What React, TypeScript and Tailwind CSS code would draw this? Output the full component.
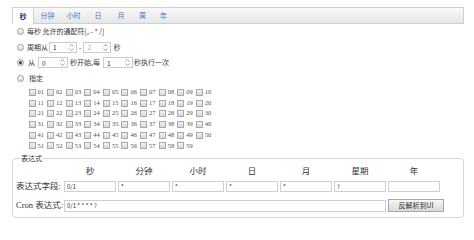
import React from 'react';

const tabs = [
  { label: '秒', w: 'w-[21px]' },
  { label: '分钟', w: 'w-[27px]' },
  { label: '小时', w: 'w-[25px]' },
  { label: '日', w: 'w-[24px]' },
  { label: '月', w: 'w-[22px]' },
  { label: '周', w: 'w-[21px]' },
  { label: '年', w: 'w-[21px]' },
];

const Radio = ({ checked = false }: { checked?: boolean }) => (
  <span className="relative inline-flex items-center justify-center w-[7px] h-[7px] rounded-full border border-[#9a9a9a] bg-gradient-to-b from-[#fdfdfd] to-[#dcdcdc] shrink-0">
    {checked && <span className="w-[3px] h-[3px] rounded-full bg-[#2f3a4a]" />}
  </span>
);

const Spinner = () => (
  <svg width="7" height="9" viewBox="0 0 7 9" className="shrink-0">
    <path d="M1.5 3.5 L3.5 1.5 L5.5 3.5" fill="none" stroke="#7e9cc0" strokeWidth="0.9" />
    <path d="M1.5 5.5 L3.5 7.5 L5.5 5.5" fill="none" stroke="#7e9cc0" strokeWidth="0.9" />
  </svg>
);

const SpinInput = ({ value, w, faded = false }: { value: string; w: string; faded?: boolean }) => (
  <span className={`inline-flex items-center justify-between h-[11px] border border-[#cbcbcb] bg-white pl-[3px] pr-[1px] ${w}`}>
    <span className={`text-[6.5px] leading-none ${faded ? 'text-[#aaa]' : 'text-[#333]'}`}>{value}</span>
    <Spinner />
  </span>
);

const numbers = Array.from({ length: 59 }, (_, i) => String(i + 1).padStart(2, '0'));

const fields = ['秒', '分钟', '小时', '日', '月', '星期', '年'];
const values = ['0/1', '*', '*', '*', '*', '?', ''];

export default function App() {
  return (
    <div className="w-[474px] h-[240px] bg-white overflow-hidden font-['Noto_Sans_CJK_SC','Noto_Sans',sans-serif] text-[#3a3a3a]">
      <div className="pl-[12px] pr-[10px] pt-[7px]">
        {/* tab bar */}
        <div className="flex h-[17px] border border-[#d0d0d0] bg-gradient-to-b from-[#f8f8f8] to-[#e7e7e7]">
          {tabs.map((t, i) => (
            <div
              key={t.label}
              className={`${t.w} flex items-center justify-center text-[7px] leading-none ${
                i === 0 ? 'bg-white font-bold text-[#1d3f78] border-r border-[#d0d0d0] -mb-px' : 'text-[#3b7bc8]'
              }`}
            >
              {t.label}
            </div>
          ))}
        </div>

        {/* rows */}
        <div className="pl-[5px] text-[7px] leading-none">
          <div className="h-[15.5px] flex items-center">
            <Radio />
            <span className="ml-[3px]">每秒 允许的通配符[, - * /]</span>
          </div>
          <div className="h-[15.5px] flex items-center">
            <Radio />
            <span className="ml-[3px]">周期从</span>
            <span className="ml-[1px]"><SpinInput value="1" w="w-[28px]" /></span>
            <span className="mx-[2px]">-</span>
            <SpinInput value="2" w="w-[28px]" faded />
            <span className="ml-[2px]">秒</span>
          </div>
          <div className="h-[15.5px] flex items-center">
            <Radio checked />
            <span className="ml-[4px]">从</span>
            <span className="ml-[3px]"><SpinInput value="0" w="w-[30px]" /></span>
            <span className="ml-[2px]">秒开始,每</span>
            <span className="ml-[3px]"><SpinInput value="1" w="w-[30px]" /></span>
            <span className="ml-[1px]">秒执行一次</span>
          </div>
          <div className="h-[15.5px] flex items-center">
            <Radio />
            <span className="ml-[5px]">指定</span>
          </div>
        </div>

        {/* checkbox grid */}
        <div className="ml-[16.5px] mt-[1px] grid grid-cols-[repeat(10,18.6px)]">
          {numbers.map((n) => (
            <div key={n} className="h-[10.7px] flex items-center">
              <span className="w-[7px] h-[7px] border border-[#a9a9a9] bg-gradient-to-b from-[#f3f3f3] to-[#d8d8d8] shrink-0" />
              <span className="ml-[2px] text-[6.5px] leading-none text-[#555] font-['Liberation_Serif',serif]">{n}</span>
            </div>
          ))}
        </div>

        {/* expression */}
        <fieldset className="mt-[2.5px] border border-[#d6d6d6] rounded-[4px] px-[3px] pb-[5px]">
          <legend className="ml-[4px] px-[1px] text-[7px] leading-[9px] text-[#333]">表达式</legend>
          <div className="grid grid-cols-[46px_repeat(7,52px)] gap-x-[2px]">
            <div className="h-[15px]" />
            {fields.map((f) => (
              <div key={f} className="h-[15px] flex items-center justify-center text-[8.5px] leading-none text-[#333]">
                {f}
              </div>
            ))}

            <div className="mt-[3px] h-[11px] flex items-center whitespace-nowrap text-[8.5px] leading-none text-[#333] font-['Liberation_Serif','Noto_Sans_CJK_SC',serif]">
              表达式字段:
            </div>
            {values.map((v, i) => (
              <input
                key={i}
                readOnly
                value={v}
                className="mt-[3px] h-[11px] w-[52px] border border-[#cfcfcf] px-[2px] text-[6px] leading-none text-[#333] outline-none"
              />
            ))}

            <div className="mt-[7.5px] h-[13px] flex items-center whitespace-nowrap text-[8.5px] leading-none text-[#333] font-['Liberation_Serif','Noto_Sans_CJK_SC',serif]">
              Cron 表达式:
            </div>
            <input
              readOnly
              value="0/1 * * * * ?"
              className="col-span-6 mt-[8px] h-[12px] border border-[#cfcfcf] px-[2px] text-[6px] leading-none text-[#333] outline-none"
            />
            <button className="mt-[7.5px] h-[13px] w-[56px] border border-[#a8a8a8] bg-gradient-to-b from-[#f8f8f8] to-[#d9d9d9] text-[7px] leading-none text-[#333]">
              反解析到UI
            </button>
          </div>
        </fieldset>
      </div>
    </div>
  );
}
